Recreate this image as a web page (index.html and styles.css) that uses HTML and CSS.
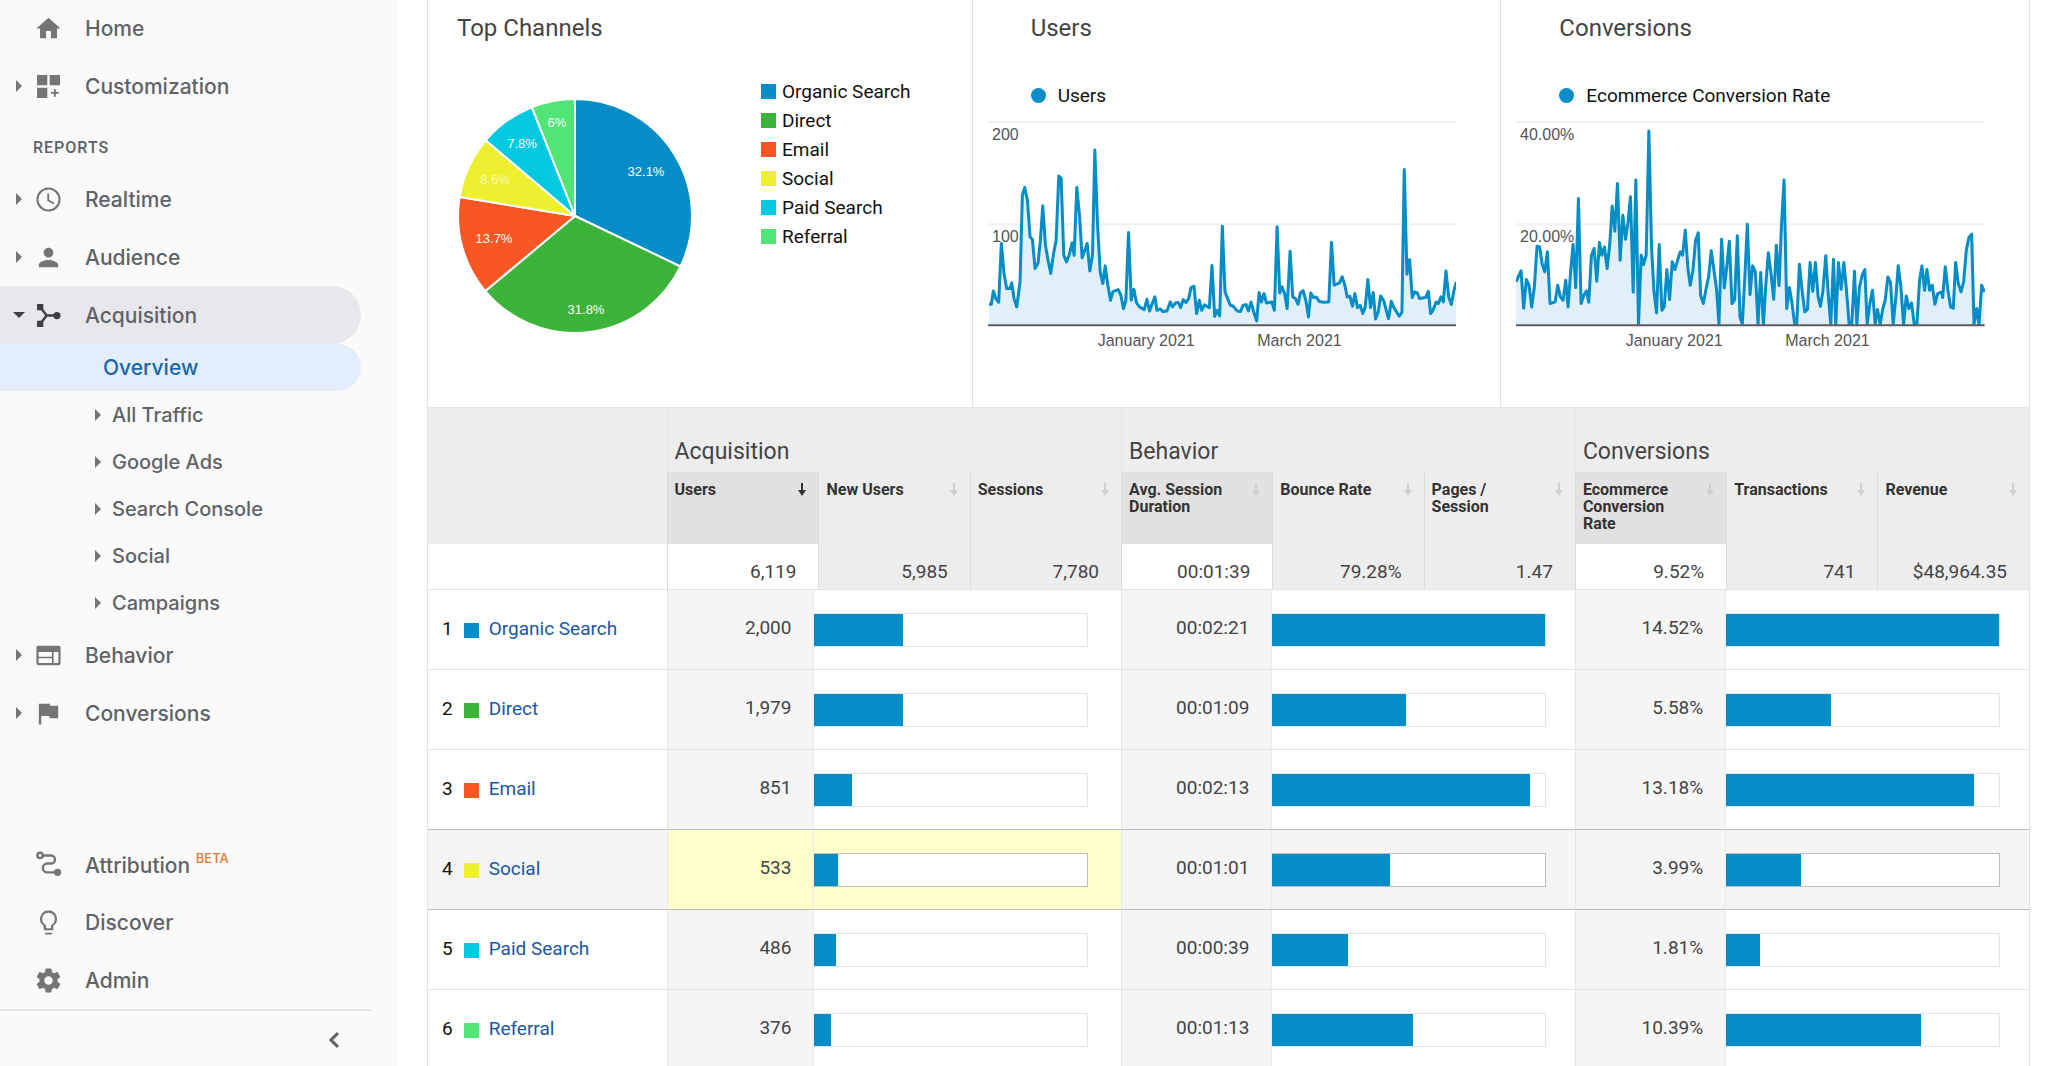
FILE: index.html
```html
<!DOCTYPE html>
<html lang="en">

<head>
    <meta charset="UTF-8">
    <meta name="viewport" content="width=device-width, initial-scale=1.0">
    <title>Acquisition Overview</title>
    <link rel="stylesheet" href="styles.css">
</head>

<body>
    <div class="app">
        <nav class="sidebar">
            <a class="nav-item" href="#">
                <span class="caret-space"></span>
                <svg class="icon" viewBox="0 0 24 24"><path d="M10 20v-6h4v6h5v-8h3L12 3 2 12h3v8z"/></svg>
                Home
            </a>
            <a class="nav-item" href="#">
                <svg class="caret" viewBox="0 0 12 12"><path d="M3 0l6 6-6 6z"/></svg>
                <svg class="icon" viewBox="0 0 24 24"><path d="M2.500 2.500h8.500v8.500H2.500zM13 2.500h8.500v8.500H13zM2.500 13h8.500v8.500H2.500zM16.500 14h1.500v2.500h2.500v1.500H18v2.500h-1.500V18H14v-1.500h2.500z"/></svg>
                Customization
            </a>
            <h2 class="nav-heading">REPORTS</h2>
            <a class="nav-item" href="#">
                <svg class="caret" viewBox="0 0 12 12"><path d="M3 0l6 6-6 6z"/></svg>
                <svg class="icon" viewBox="0 0 24 24"><path d="M12 2a10 10 0 1 0 0 20 10 10 0 0 0 0-20zm0 18.300a8.300 8.300 0 1 1 0-16.600 8.300 8.300 0 0 1 0 16.600z"/><path d="M12.500 7H11v6l5 3 .8-1.300-4.300-2.500z"/></svg>
                Realtime
            </a>
            <a class="nav-item" href="#">
                <svg class="caret" viewBox="0 0 12 12"><path d="M3 0l6 6-6 6z"/></svg>
                <svg class="icon" viewBox="0 0 24 24"><path d="M12 12c2.210 0 4-1.790 4-4s-1.790-4-4-4-4 1.790-4 4 1.790 4 4 4zm0 2c-2.670 0-8 1.340-8 4v2h16v-2c0-2.660-5.330-4-8-4z"/></svg>
                Audience
            </a>
            <a class="nav-item active" href="#">
                <svg class="caret" viewBox="0 0 12 12"><path d="M0 3h12l-6 6z"/></svg>
                <svg class="icon" viewBox="0 0 24 24"><path d="M2.500 2.500h5.200v5.200H2.500zM2.500 16.300h5.200v5.200H2.500z"/><circle cx="19" cy="12" r="3"/><path class="line" d="M5.500 5.500l5 6.500-5 6.500M10.500 12H18"/></svg>
                Acquisition
            </a>
            <a class="sub-item current" href="#">Overview</a>
            <a class="sub-item" href="#"><svg class="caret" viewBox="0 0 12 12"><path d="M3 0l6 6-6 6z"/></svg>All Traffic</a>
            <a class="sub-item" href="#"><svg class="caret" viewBox="0 0 12 12"><path d="M3 0l6 6-6 6z"/></svg>Google Ads</a>
            <a class="sub-item" href="#"><svg class="caret" viewBox="0 0 12 12"><path d="M3 0l6 6-6 6z"/></svg>Search Console</a>
            <a class="sub-item" href="#"><svg class="caret" viewBox="0 0 12 12"><path d="M3 0l6 6-6 6z"/></svg>Social</a>
            <a class="sub-item" href="#"><svg class="caret" viewBox="0 0 12 12"><path d="M3 0l6 6-6 6z"/></svg>Campaigns</a>
            <a class="nav-item" href="#">
                <svg class="caret" viewBox="0 0 12 12"><path d="M3 0l6 6-6 6z"/></svg>
                <svg class="icon" viewBox="0 0 24 24"><path fill-rule="evenodd" d="M3.500 4h17A1.500 1.500 0 0 1 22 5.500v13a1.500 1.500 0 0 1-1.500 1.500h-17A1.500 1.500 0 0 1 2 18.500v-13A1.500 1.500 0 0 1 3.500 4zM3.800 9v4h11V9zm12.400 0v9.300h4V9zM3.800 14.300v4h11v-4z"/></svg>
                Behavior
            </a>
            <a class="nav-item" href="#">
                <svg class="caret" viewBox="0 0 12 12"><path d="M3 0l6 6-6 6z"/></svg>
                <svg class="icon" viewBox="0 0 24 24"><path d="M13.400 5.500L13 4H4v17h2v-7h6.600l.4 2h7V5.500z"/></svg>
                Conversions
            </a>

            <div class="nav-bottom">
                <a class="nav-item" href="#">
                    <span class="caret-space"></span>
                    <svg class="icon" viewBox="0 0 24 24"><circle class="line" cx="5" cy="4.500" r="2.200"/><path class="line" d="M7.500 4.500H14a3.300 3.300 0 0 1 0 6.700h-3a3.600 3.600 0 0 0 0 7.300h7"/><circle cx="19.500" cy="18.500" r="3"/></svg>
                    <span>Attribution <sup class="beta">BETA</sup></span>
                </a>
                <a class="nav-item" href="#">
                    <span class="caret-space"></span>
                    <svg class="icon" viewBox="0 0 24 24"><path d="M9 20.500h6V22H9zM12 2a7 7 0 0 0-4 12.740V17.500c0 .55.45 1 1 1h6c.55 0 1-.45 1-1v-2.760A7 7 0 0 0 12 2zm2.850 11.600l-.85.6v2.600h-4v-2.600l-.85-.6a5.300 5.300 0 1 1 5.700 0z"/></svg>
                    Discover
                </a>
                <a class="nav-item" href="#">
                    <span class="caret-space"></span>
                    <svg class="icon" viewBox="0 0 24 24"><path d="M19.430 12.980c.04-.32.07-.64.07-.98s-.03-.66-.07-.98l2.110-1.650c.19-.15.24-.42.12-.64l-2-3.460c-.12-.22-.39-.3-.61-.22l-2.490 1c-.52-.4-1.080-.73-1.690-.98l-.38-2.650C14.460 2.180 14.250 2 14 2h-4c-.25 0-.46.18-.49.42l-.38 2.650c-.61.25-1.170.59-1.690.98l-2.490-1c-.23-.09-.49 0-.61.22l-2 3.460c-.13.22-.07.49.12.64l2.110 1.650c-.04.32-.07.65-.07.98s.03.66.07.98l-2.110 1.650c-.19.15-.24.42-.12.64l2 3.460c.12.22.39.3.61.22l2.490-1c.52.4 1.080.73 1.690.98l.38 2.650c.03.24.24.42.49.42h4c.25 0 .46-.18.49-.42l.38-2.650c.61-.25 1.170-.59 1.690-.98l2.490 1c.23.09.49 0 .61-.22l2-3.460c.12-.22.07-.49-.12-.64l-2.110-1.650zM12 15.500c-1.930 0-3.500-1.570-3.500-3.500s1.570-3.500 3.500-3.500 3.500 1.570 3.500 3.500-1.570 3.500-3.500 3.500z"/></svg>
                    Admin
                </a>
            </div>
            <div class="collapse-bar">
                <button class="collapse" aria-label="Collapse menu"><svg viewBox="0 0 12 18"><path d="M10 2L3 9l7 7"/></svg></button>
            </div>
        </nav>

        <main class="report">
            <div class="panels">
                <section class="panel">
                    <h2>Top Channels</h2>
                    <div class="pie-row">
                        <svg class="pie" viewBox="-118 -118 236 236">
                            <path class="organic" d="M0 0V-117A117 117 0 0 1 105.500 50.500z"/>
                            <path class="direct" d="M0 0L105.500 50.500A117 117 0 0 1-89.700 75.100z"/>
                            <path class="email" d="M0 0L-89.700 75.100A117 117 0 0 1-115.400-19z"/>
                            <path class="social" d="M0 0L-115.400-19A117 117 0 0 1-89.200-75.700z"/>
                            <path class="paid" d="M0 0L-89.200-75.700A117 117 0 0 1-43.100-108.800z"/>
                            <path class="referral" d="M0 0L-43.100-108.800A117 117 0 0 1 0-117z"/>
                            <text x="71" y="-40">32.1%</text>
                            <text x="11" y="98">31.8%</text>
                            <text x="-81" y="27">13.7%</text>
                            <text x="-80" y="-32" opacity="0.6">8.6%</text>
                            <text x="-53" y="-68">7.8%</text>
                            <text x="-18" y="-89">6%</text>
                        </svg>
                        <ul class="pie-legend">
                            <li><i class="swatch organic"></i>Organic Search</li>
                            <li><i class="swatch direct"></i>Direct</li>
                            <li><i class="swatch email"></i>Email</li>
                            <li><i class="swatch social"></i>Social</li>
                            <li><i class="swatch paid"></i>Paid Search</li>
                            <li><i class="swatch referral"></i>Referral</li>
                        </ul>
                    </div>
                </section>

                <section class="panel chart-panel">
                    <h2>Users</h2>
                    <p class="chart-legend"><i class="dot"></i>Users</p>
                    <svg class="chart" viewBox="0 0 468 232">
                        <path class="grid" d="M0 2H468M0 104H468"/>
                        <svg x="0" y="2" width="468" height="203" viewBox="54 66 1404 609">
                            <polygon class="area" points="57,675 57,612 64,612 70,572 78,596 86,606 94,430 102,520 110,565 120,565 125,548 132,595 140,620 150,545 157,285 164,262 172,300 180,410 187,418 195,505 204,488 211,420 218,317 226,435 234,480 242,520 250,462 258,420 266,228 273,234 281,465 289,485 297,465 306,428 312,465 320,262 328,345 336,473 344,450 351,430 359,512 367,465 374,150 382,370 390,515 398,550 405,497 413,555 421,600 428,574 444,568 452,585 460,625 467,600 475,397 483,600 491,567 499,608 508,620 522,628 530,597 538,632 546,610 554,590 560,630 570,626 578,634 590,632 600,605 607,620 616,608 624,607 631,622 639,598 647,607 655,595 662,562 671,558 679,640 687,600 694,630 702,614 717,622 725,496 733,648 741,630 748,647 756,378 764,575 772,595 780,615 788,617 800,632 810,634 818,615 827,613 834,632 842,605 850,635 859,662 866,577 873,605 881,580 888,608 904,605 912,630 920,380 928,578 935,560 943,582 950,625 959,453 967,590 975,595 983,612 990,578 998,571 1006,600 1014,650 1021,578 1029,592 1037,590 1047,604 1060,606 1075,605 1083,426 1091,555 1107,548 1115,530 1123,555 1130,590 1138,588 1146,618 1153,580 1161,622 1169,615 1177,640 1184,620 1192,538 1200,622 1208,577 1215,656 1223,635 1230,587 1240,603 1247,630 1254,655 1262,603 1270,622 1286,648 1294,636 1301,208 1309,522 1317,478 1325,592 1332,575 1340,578 1347,595 1365,592 1373,573 1380,640 1388,628 1396,605 1403,610 1411,590 1418,605 1426,512 1434,590 1442,613 1450,570 1457,545 1457,675"/>
                            <polyline class="trend" points="57,612 64,612 70,572 78,596 86,606 94,430 102,520 110,565 120,565 125,548 132,595 140,620 150,545 157,285 164,262 172,300 180,410 187,418 195,505 204,488 211,420 218,317 226,435 234,480 242,520 250,462 258,420 266,228 273,234 281,465 289,485 297,465 306,428 312,465 320,262 328,345 336,473 344,450 351,430 359,512 367,465 374,150 382,370 390,515 398,550 405,497 413,555 421,600 428,574 444,568 452,585 460,625 467,600 475,397 483,600 491,567 499,608 508,620 522,628 530,597 538,632 546,610 554,590 560,630 570,626 578,634 590,632 600,605 607,620 616,608 624,607 631,622 639,598 647,607 655,595 662,562 671,558 679,640 687,600 694,630 702,614 717,622 725,496 733,648 741,630 748,647 756,378 764,575 772,595 780,615 788,617 800,632 810,634 818,615 827,613 834,632 842,605 850,635 859,662 866,577 873,605 881,580 888,608 904,605 912,630 920,380 928,578 935,560 943,582 950,625 959,453 967,590 975,595 983,612 990,578 998,571 1006,600 1014,650 1021,578 1029,592 1037,590 1047,604 1060,606 1075,605 1083,426 1091,555 1107,548 1115,530 1123,555 1130,590 1138,588 1146,618 1153,580 1161,622 1169,615 1177,640 1184,620 1192,538 1200,622 1208,577 1215,656 1223,635 1230,587 1240,603 1247,630 1254,655 1262,603 1270,622 1286,648 1294,636 1301,208 1309,522 1317,478 1325,592 1332,575 1340,578 1347,595 1365,592 1373,573 1380,640 1388,628 1396,605 1403,610 1411,590 1418,605 1426,512 1434,590 1442,613 1450,570 1457,545"/>
                        </svg>
                        <path class="base" d="M0 205H468"/>
                        <text x="4" y="20">200</text>
                        <text x="4" y="122">100</text>
                        <text class="month" x="158" y="226">January 2021</text>
                        <text class="month" x="311" y="226">March 2021</text>
                    </svg>
                </section>

                <section class="panel chart-panel">
                    <h2>Conversions</h2>
                    <p class="chart-legend"><i class="dot"></i>Ecommerce Conversion Rate</p>
                    <svg class="chart" viewBox="0 0 468 232">
                        <path class="grid" d="M0 2H468M0 104H468"/>
                        <svg x="0" y="2" width="468" height="203" viewBox="51 66 1404 609">
                            <polygon class="area" points="51,675 51,545 66,512 74,624 82,538 90,555 98,620 106,560 114,438 122,440 129,490 137,515 145,455 153,610 168,605 176,555 184,590 192,600 200,540 207,620 215,510 222,433 230,562 238,295 246,610 254,585 262,572 269,606 277,465 285,445 293,543 301,427 308,465 316,440 324,505 332,430 339,318 347,393 355,250 363,480 371,345 379,417 386,370 394,290 402,576 410,240 418,672 426,465 433,493 441,465 449,93 457,440 464,570 472,638 480,433 488,630 495,620 503,508 511,598 519,485 527,508 535,480 543,455 550,465 558,390 566,505 573,555 581,510 589,420 597,398 604,585 612,610 620,568 628,530 636,452 644,510 652,570 659,672 667,417 675,563 682,505 690,423 698,610 706,598 714,407 722,650 729,672 737,520 744,372 752,583 760,497 768,515 776,672 784,517 792,672 800,545 807,458 815,520 823,597 831,435 839,556 846,380 854,240 862,625 870,562 878,610 886,672 892,672 900,492 908,570 916,635 924,628 932,487 940,573 948,487 956,590 963,618 970,575 979,467 987,590 994,672 1002,477 1009,672 1017,487 1025,567 1033,487 1041,570 1049,672 1057,672 1065,513 1072,672 1080,560 1088,525 1096,508 1103,672 1111,610 1119,570 1127,672 1134,628 1142,672 1150,625 1157,600 1165,530 1173,548 1181,672 1189,590 1196,497 1204,560 1212,672 1220,587 1228,625 1236,608 1244,672 1252,672 1260,540 1267,497 1275,570 1282,508 1290,570 1298,555 1306,612 1314,580 1327,575 1329,592 1337,500 1345,570 1353,620 1361,624 1368,487 1376,550 1384,575 1392,545 1400,450 1408,412 1416,402 1423,672 1431,625 1438,672 1446,555 1454,575 1454,675"/>
                            <polyline class="trend" points="51,545 66,512 74,624 82,538 90,555 98,620 106,560 114,438 122,440 129,490 137,515 145,455 153,610 168,605 176,555 184,590 192,600 200,540 207,620 215,510 222,433 230,562 238,295 246,610 254,585 262,572 269,606 277,465 285,445 293,543 301,427 308,465 316,440 324,505 332,430 339,318 347,393 355,250 363,480 371,345 379,417 386,370 394,290 402,576 410,240 418,672 426,465 433,493 441,465 449,93 457,440 464,570 472,638 480,433 488,630 495,620 503,508 511,598 519,485 527,508 535,480 543,455 550,465 558,390 566,505 573,555 581,510 589,420 597,398 604,585 612,610 620,568 628,530 636,452 644,510 652,570 659,672 667,417 675,563 682,505 690,423 698,610 706,598 714,407 722,650 729,672 737,520 744,372 752,583 760,497 768,515 776,672 784,517 792,672 800,545 807,458 815,520 823,597 831,435 839,556 846,380 854,240 862,625 870,562 878,610 886,672 892,672 900,492 908,570 916,635 924,628 932,487 940,573 948,487 956,590 963,618 970,575 979,467 987,590 994,672 1002,477 1009,672 1017,487 1025,567 1033,487 1041,570 1049,672 1057,672 1065,513 1072,672 1080,560 1088,525 1096,508 1103,672 1111,610 1119,570 1127,672 1134,628 1142,672 1150,625 1157,600 1165,530 1173,548 1181,672 1189,590 1196,497 1204,560 1212,672 1220,587 1228,625 1236,608 1244,672 1252,672 1260,540 1267,497 1275,570 1282,508 1290,570 1298,555 1306,612 1314,580 1327,575 1329,592 1337,500 1345,570 1353,620 1361,624 1368,487 1376,550 1384,575 1392,545 1400,450 1408,412 1416,402 1423,672 1431,625 1438,672 1446,555 1454,575"/>
                        </svg>
                        <path class="base" d="M0 205H468"/>
                        <text x="4" y="20">40.00%</text>
                        <text x="4" y="122">20.00%</text>
                        <text class="month" x="158" y="226">January 2021</text>
                        <text class="month" x="311" y="226">March 2021</text>
                    </svg>
                </section>
            </div>

            <table class="metrics">
                <colgroup>
                    <col class="c-name">
                    <col class="c-value"><col class="c-inset"><col class="c-metric"><col class="c-metric">
                    <col class="c-metric"><col class="c-metric"><col class="c-metric">
                    <col class="c-metric"><col class="c-metric"><col>
                </colgroup>
                <thead>
                    <tr class="groups">
                        <td></td>
                        <th colspan="4" scope="colgroup">Acquisition</th>
                        <th colspan="3" scope="colgroup">Behavior</th>
                        <th colspan="3" scope="colgroup">Conversions</th>
                    </tr>
                    <tr class="heads">
                        <td></td>
                        <th class="main-metric" colspan="2" scope="col"><button class="sorted">Users<svg viewBox="0 0 8 14"><path d="M3 0h2v7h3l-4 6-4-6h3z"/></svg></button></th>
                        <th scope="col"><button>New Users<svg viewBox="0 0 8 14"><path d="M3 0h2v7h3l-4 6-4-6h3z"/></svg></button></th>
                        <th scope="col"><button>Sessions<svg viewBox="0 0 8 14"><path d="M3 0h2v7h3l-4 6-4-6h3z"/></svg></button></th>
                        <th class="main-metric" scope="col"><button>Avg. Session<br>Duration<svg viewBox="0 0 8 14"><path d="M3 0h2v7h3l-4 6-4-6h3z"/></svg></button></th>
                        <th scope="col"><button>Bounce Rate<svg viewBox="0 0 8 14"><path d="M3 0h2v7h3l-4 6-4-6h3z"/></svg></button></th>
                        <th scope="col"><button>Pages /<br>Session<svg viewBox="0 0 8 14"><path d="M3 0h2v7h3l-4 6-4-6h3z"/></svg></button></th>
                        <th class="main-metric" scope="col"><button>Ecommerce<br>Conversion<br>Rate<svg viewBox="0 0 8 14"><path d="M3 0h2v7h3l-4 6-4-6h3z"/></svg></button></th>
                        <th scope="col"><button>Transactions<svg viewBox="0 0 8 14"><path d="M3 0h2v7h3l-4 6-4-6h3z"/></svg></button></th>
                        <th scope="col"><button>Revenue<svg viewBox="0 0 8 14"><path d="M3 0h2v7h3l-4 6-4-6h3z"/></svg></button></th>
                    </tr>
                    <tr class="totals">
                        <td class="plain"></td>
                        <td class="plain" colspan="2">6,119</td>
                        <td>5,985</td>
                        <td>7,780</td>
                        <td class="plain">00:01:39</td>
                        <td>79.28%</td>
                        <td>1.47</td>
                        <td class="plain">9.52%</td>
                        <td>741</td>
                        <td>$48,964.35</td>
                    </tr>
                </thead>
                <tbody>
                    <tr>
                        <th scope="row"><div class="channel"><span>1</span><i class="swatch organic"></i><a href="#">Organic Search</a></div></th>
                        <td class="value acq">2,000</td>
                        <td class="acq" colspan="3"><div class="bar"><div class="fill" style="width: 32.500%"></div></div></td>
                        <td class="value">00:02:21</td>
                        <td colspan="2"><div class="bar"><div class="fill" style="width: 100%"></div></div></td>
                        <td class="value">14.52%</td>
                        <td colspan="2"><div class="bar"><div class="fill" style="width: 100%"></div></div></td>
                    </tr>
                    <tr>
                        <th scope="row"><div class="channel"><span>2</span><i class="swatch direct"></i><a href="#">Direct</a></div></th>
                        <td class="value acq">1,979</td>
                        <td class="acq" colspan="3"><div class="bar"><div class="fill" style="width: 32.500%"></div></div></td>
                        <td class="value">00:01:09</td>
                        <td colspan="2"><div class="bar"><div class="fill" style="width: 49%"></div></div></td>
                        <td class="value">5.58%</td>
                        <td colspan="2"><div class="bar"><div class="fill" style="width: 38.400%"></div></div></td>
                    </tr>
                    <tr>
                        <th scope="row"><div class="channel"><span>3</span><i class="swatch email"></i><a href="#">Email</a></div></th>
                        <td class="value acq">851</td>
                        <td class="acq" colspan="3"><div class="bar"><div class="fill" style="width: 13.900%"></div></div></td>
                        <td class="value">00:02:13</td>
                        <td colspan="2"><div class="bar"><div class="fill" style="width: 94.400%"></div></div></td>
                        <td class="value">13.18%</td>
                        <td colspan="2"><div class="bar"><div class="fill" style="width: 90.800%"></div></div></td>
                    </tr>
                    <tr class="hovered">
                        <th scope="row"><div class="channel"><span>4</span><i class="swatch social"></i><a href="#">Social</a></div></th>
                        <td class="value acq">533</td>
                        <td class="acq" colspan="3"><div class="bar"><div class="fill" style="width: 8.700%"></div></div></td>
                        <td class="value">00:01:01</td>
                        <td colspan="2"><div class="bar"><div class="fill" style="width: 43.200%"></div></div></td>
                        <td class="value">3.99%</td>
                        <td colspan="2"><div class="bar"><div class="fill" style="width: 27.500%"></div></div></td>
                    </tr>
                    <tr>
                        <th scope="row"><div class="channel"><span>5</span><i class="swatch paid"></i><a href="#">Paid Search</a></div></th>
                        <td class="value acq">486</td>
                        <td class="acq" colspan="3"><div class="bar"><div class="fill" style="width: 8%"></div></div></td>
                        <td class="value">00:00:39</td>
                        <td colspan="2"><div class="bar"><div class="fill" style="width: 27.700%"></div></div></td>
                        <td class="value">1.81%</td>
                        <td colspan="2"><div class="bar"><div class="fill" style="width: 12.400%"></div></div></td>
                    </tr>
                    <tr>
                        <th scope="row"><div class="channel"><span>6</span><i class="swatch referral"></i><a href="#">Referral</a></div></th>
                        <td class="value acq">376</td>
                        <td class="acq" colspan="3"><div class="bar"><div class="fill" style="width: 6.200%"></div></div></td>
                        <td class="value">00:01:13</td>
                        <td colspan="2"><div class="bar"><div class="fill" style="width: 51.700%"></div></div></td>
                        <td class="value">10.39%</td>
                        <td colspan="2"><div class="bar"><div class="fill" style="width: 71.500%"></div></div></td>
                    </tr>
                </tbody>
            </table>
        </main>
    </div>
</body>

</html>
```
FILE: styles.css
```css
* {
    box-sizing: border-box;
}

body {
    font-family: Roboto, Arial, sans-serif;
    margin: 0;
    background-color: #fff;
    color: #222;
    font-size: 19px;
}

h2,
p,
ul {
    margin: 0;
    padding: 0;
}

.app {
    display: flex;
    height: 100vh;
    overflow: hidden;
}

/* sidebar */
.sidebar {
    display: flex;
    flex-direction: column;
    flex: 0 0 397px;
    background: #fafafb;
    color: #5f6368;
    font-family: Inter, Roboto, sans-serif;
    font-size: 21px;
    font-weight: 500;
}

.nav-item,
.sub-item {
    display: flex;
    align-items: center;
    color: inherit;
    text-decoration: none;
    white-space: nowrap;
}

.nav-item {
    height: 58px;
    flex-shrink: 0;
    margin-right: 36px;
    padding-left: 13px;
}

.nav-item:first-child {
    height: 57px;
}

.nav-item.active {
    background: #e8e8ec;
    border-radius: 0 29px 29px 0;
}

.caret,
.caret-space {
    width: 12px;
    height: 12px;
    flex-shrink: 0;
    fill: #757575;
}

.icon {
    width: 29px;
    height: 29px;
    margin: 0 22px 0 9px;
    flex-shrink: 0;
    fill: #757575;
    stroke: none;
}

.icon .line {
    fill: none;
    stroke: #757575;
    stroke-width: 2;
}

.active .icon,
.active .caret {
    fill: #3c4043;
}

.active .icon .line {
    stroke: #3c4043;
}

.nav-heading {
    height: 55px;
    padding: 10px 0 0 33px;
    font-family: Roboto, sans-serif;
    font-size: 16px;
    font-weight: 500;
    line-height: 46px;
    letter-spacing: 1px;
}

.sub-item {
    height: 47px;
    flex-shrink: 0;
    margin-right: 36px;
    padding-left: 92px;
    font-size: 20px;
}

.sub-item .caret {
    margin-right: 8px;
}

.sub-item.current {
    padding-left: 103px;
    background: #e3eefc;
    border-radius: 0 24px 24px 0;
    color: #1967a8;
    font-size: 21px;
}

.nav-bottom {
    margin-top: auto;
}

.beta {
    color: #e07b39;
    font-size: 13px;
    line-height: 1;
    vertical-align: 10px;
}

.collapse-bar {
    display: flex;
    justify-content: flex-end;
    align-items: center;
    height: 57px;
    flex-shrink: 0;
    margin-right: 25px;
    padding: 6px 26px 0 0;
    border-top: 2px solid #e8e8e8;
}

.collapse {
    width: 24px;
    height: 32px;
    padding: 0;
    border: none;
    background: none;
    cursor: pointer;
}

.collapse svg {
    width: 12px;
    height: 18px;
    fill: none;
    stroke: #5f6368;
    stroke-width: 3;
}

/* top panels */
.report {
    flex: 1;
    min-width: 0;
    margin: 0 18px 0 30px;
}

.panels {
    display: grid;
    grid-template-columns: 545fr 529fr 529fr;
    height: 407px;
    border-right: 1px solid #e3e3e3;
}

.panel {
    min-width: 0;
    padding: 14px 29px 0;
    border-left: 1px solid #e3e3e3;
}

.panel h2,
.groups th {
    font-size: 23px;
    font-weight: 400;
    line-height: 28px;
    color: #444;
}

.panel h2 {
    font-size: 24px;
}

.pie-row {
    display: flex;
    align-items: flex-start;
    margin-top: 35px;
}

.pie {
    width: 236px;
    flex-shrink: 1;
    min-width: 0;
    margin: 21px 68px 0 0;
}

.pie path {
    stroke: #fff;
    stroke-width: 2;
}

.pie text {
    font-family: "Liberation Sans", Arial, sans-serif;
    font-size: 13px;
    fill: #fff;
    text-anchor: middle;
}

.pie-legend {
    list-style: none;
    color: #111;
    white-space: nowrap;
}

.pie-legend li {
    display: flex;
    align-items: center;
    gap: 6px;
    height: 29px;
}

.swatch {
    width: 15px;
    height: 15px;
    flex-shrink: 0;
}

.organic {
    fill: #058dc7;
    background: #058dc7;
}

.direct {
    fill: #3cb43a;
    background: #3cb43a;
}

.email {
    fill: #f85723;
    background: #f85723;
}

.social {
    fill: #edef2f;
    background: #edef2f;
}

.paid {
    fill: #03c9e0;
    background: #03c9e0;
}

.referral {
    fill: #50e574;
    background: #50e574;
}

.chart-panel {
    padding: 14px 44px 0 15px;
}

.chart-panel h2 {
    margin-left: 43px;
}

.chart-legend {
    display: flex;
    align-items: center;
    gap: 12px;
    height: 28px;
    margin: 39px 0 11px 43px;
    color: #111;
}

.dot {
    width: 15px;
    height: 15px;
    border-radius: 50%;
    background: #058dc7;
}

.chart {
    display: block;
    width: 100%;
}

.chart svg {
    overflow: visible;
}

.chart text {
    font-family: "Liberation Sans", Arial, sans-serif;
    font-size: 16px;
    fill: #555;
}

.chart .month {
    text-anchor: middle;
}

.grid {
    stroke: #f0f0f0;
    stroke-width: 2;
}

.base {
    stroke: #5b5b5f;
    stroke-width: 2;
}

.area {
    fill: #e1f0f8;
}

.trend {
    fill: none;
    stroke: #058dc7;
    stroke-width: 9;
    stroke-linejoin: round;
}

/* metrics table */
.metrics {
    width: 100%;
    table-layout: fixed;
    border-collapse: separate;
    border-spacing: 0;
    border-left: 1px solid #e3e3e3;
    border-right: 1px solid #e3e3e3;
}

.c-name {
    width: 14.900%;
}

.c-value {
    width: 9.240%;
}

.c-inset {
    width: 0.250%;
}

.c-metric {
    width: 9.450%;
}

.metrics td,
.metrics th {
    padding: 0;
    font-weight: 400;
    text-align: left;
}

.metrics thead td,
.metrics thead th {
    background: #ededed;
}

.metrics .groups td,
.metrics .groups th {
    height: 65px;
    padding-top: 23px;
    border-top: 1px solid #e3e3e3;
}

.metrics .groups th {
    padding-left: 7px;
    border-left: 1px solid #e6e6e6;
}

.heads td,
.heads th {
    height: 72px;
}

.metrics .heads th {
    vertical-align: top;
}

.heads th,
.totals td + td {
    border-left: 1px solid #dcdcdc;
}

.metrics .heads .main-metric {
    background: #e2e2e2;
}

.heads button {
    position: relative;
    display: block;
    width: 100%;
    padding: 9px 24px 0 7px;
    border: none;
    background: none;
    color: #333;
    font-family: inherit;
    font-size: 16px;
    font-weight: 700;
    line-height: 17px;
    text-align: left;
    white-space: nowrap;
    cursor: pointer;
}

.heads svg {
    position: absolute;
    top: 11px;
    right: 12px;
    width: 8px;
    height: 14px;
    fill: #cfcfcf;
}

.heads .sorted svg {
    fill: #333;
}

.metrics .totals td {
    height: 46px;
    padding: 9px 22px 0 0;
    border-bottom: 1px solid #e3e3e3;
    color: #444;
    text-align: right;
}

.metrics .totals .plain {
    background: #fff;
}

.metrics tbody td,
.metrics tbody th {
    height: 80px;
    border-bottom: 1px solid #e3e3e3;
    color: #444;
}

.metrics tbody .value {
    padding: 0 22px 5px 0;
    background: #f5f5f5;
    border-left: 1px solid #e6e6e6;
    border-right: 1px solid #ececec;
    text-align: right;
}

.channel {
    display: flex;
    align-items: center;
    padding-left: 14px;
    padding-bottom: 2px;
    color: #111;
}

.channel .swatch {
    margin: 4px 10px 0 11px;
}

.channel a {
    color: #1a57a5;
    text-decoration: none;
}

.bar {
    width: 274px;
    max-width: 100%;
    height: 34px;
    border: 1px solid #e3e3e3;
    border-left: none;
    background: #fff;
}

.fill {
    height: 100%;
    background: #058dc7;
}

.metrics .hovered td,
.metrics .hovered th,
.metrics .hovered .value {
    background: #f5f5f5;
    border-bottom-color: #bdbdbd;
}

.metrics .hovered .acq {
    background: #ffffcc;
}

.metrics tr:has(+ .hovered) td,
.metrics tr:has(+ .hovered) th {
    border-bottom-color: #bdbdbd;
}

.hovered .bar {
    border-color: #bdbdbd;
}
```
